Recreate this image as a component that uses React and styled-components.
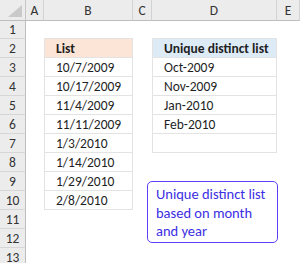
import React from 'react';
import styled, { createGlobalStyle } from 'styled-components';

const GlobalStyle = createGlobalStyle`
  html, body {
    margin: 0;
    padding: 0;
    background: #ffffff;
    overflow: hidden;
  }
  body {
    font-family: Calibri, Carlito, "Liberation Sans", Arial, sans-serif;
    color: #222;
  }
`;

const columns = ['A', 'B', 'C', 'D', 'E'];
const rowCount = 13;

const listValues = [
  '10/7/2009',
  '10/17/2009',
  '11/4/2009',
  '11/11/2009',
  '1/3/2010',
  '1/14/2010',
  '1/29/2010',
  '2/8/2010',
];

const uniqueValues = ['Oct-2009', 'Nov-2009', 'Jan-2010', 'Feb-2010', ''];

const Sheet = styled.div`
  position: relative;
  width: 300px;
  height: 263px;
  display: grid;
  grid-template-columns: 26px 18px 89px 19px 125px 1fr;
  grid-template-rows: 21px 18px repeat(12, 19px);
  overflow: hidden;
  font-size: 13px;
`;

const Corner = styled.div`
  background: #ececec;
  border-right: 1px solid #c6c6c6;
  border-bottom: 1px solid #bdbdbd;
  display: flex;
  align-items: flex-end;
  justify-content: flex-end;
  padding: 0 3px 3px 0;
`;

const ColHead = styled.div`
  background: #ececec;
  border-right: 1px solid #d2d2d2;
  border-bottom: 1px solid #bdbdbd;
  display: flex;
  align-items: center;
  justify-content: center;
  color: #333;
  font-size: 13.5px;
`;

const RowHead = styled.div`
  background: #ececec;
  border-right: 1px solid #bdbdbd;
  border-bottom: 1px solid #d6d6d6;
  display: flex;
  align-items: center;
  justify-content: center;
  color: #333;
  font-size: 13.5px;
`;

const Cell = styled.div`
  display: flex;
  align-items: center;
  padding-left: ${(p) => (p.$indent ? '11px' : '0')};
  background: ${(p) => p.$fill || 'transparent'};
  font-weight: ${(p) => (p.$bold ? 700 : 400)};
  font-size: 13.5px;
  white-space: nowrap;
  color: #1f1f1f;
  border-left: ${(p) => (p.$boxed ? '1px solid #e3e3e3' : 'none')};
  border-right: ${(p) => (p.$boxed ? '1px solid #e3e3e3' : 'none')};
  border-bottom: ${(p) => (p.$boxed ? '1px solid #e3e3e3' : 'none')};
  border-top: ${(p) => (p.$first ? '1px solid #e3e3e3' : 'none')};
  margin-top: ${(p) => (p.$first ? '-1px' : '0')};
`;

const Note = styled.div`
  position: absolute;
  left: 147px;
  top: 181px;
  width: 131px;
  height: 62px;
  box-sizing: border-box;
  border: 1.5px solid #5b3ff6;
  border-radius: 5px;
  padding: 3px 0 0 8px;
  color: #3b2ee3;
  font-family: Calibri, Carlito, "Liberation Sans", Arial, sans-serif;
  font-size: 14.5px;
  line-height: 18.5px;
`;

const CornerMark = () => (
  <svg width="14" height="12" viewBox="0 0 14 12">
    <polygon points="14,0 14,12 0,12" fill="#c9c9c9" />
  </svg>
);

const cellFor = (row, col) => {
  if (col === 'B' && row >= 2 && row <= 10) {
    if (row === 2) {
      return { text: 'List', fill: '#fce4d6', bold: true, boxed: true, first: true };
    }
    return { text: listValues[row - 3], boxed: true };
  }
  if (col === 'D' && row >= 2 && row <= 7) {
    if (row === 2) {
      return { text: 'Unique distinct list', fill: '#ddebf7', bold: true, boxed: true, first: true };
    }
    return { text: uniqueValues[row - 3], boxed: true };
  }
  return { text: '' };
};

export default function App() {
  const rows = Array.from({ length: rowCount }, (_, i) => i + 1);
  return (
    <>
      <GlobalStyle />
      <Sheet>
        <Corner>
          <CornerMark />
        </Corner>
        {columns.map((c) => (
          <ColHead key={c}>{c}</ColHead>
        ))}
        {rows.map((r) => (
          <React.Fragment key={r}>
            <RowHead>{r}</RowHead>
            {columns.map((c) => {
              const cell = cellFor(r, c);
              return (
                <Cell
                  key={c}
                  $indent={cell.boxed}
                  $fill={cell.fill}
                  $bold={cell.bold}
                  $boxed={cell.boxed}
                  $first={cell.first}
                >
                  {cell.text}
                </Cell>
              );
            })}
          </React.Fragment>
        ))}
        <Note>
          Unique distinct list
          <br />
          based on month
          <br />
          and year
        </Note>
      </Sheet>
    </>
  );
}
